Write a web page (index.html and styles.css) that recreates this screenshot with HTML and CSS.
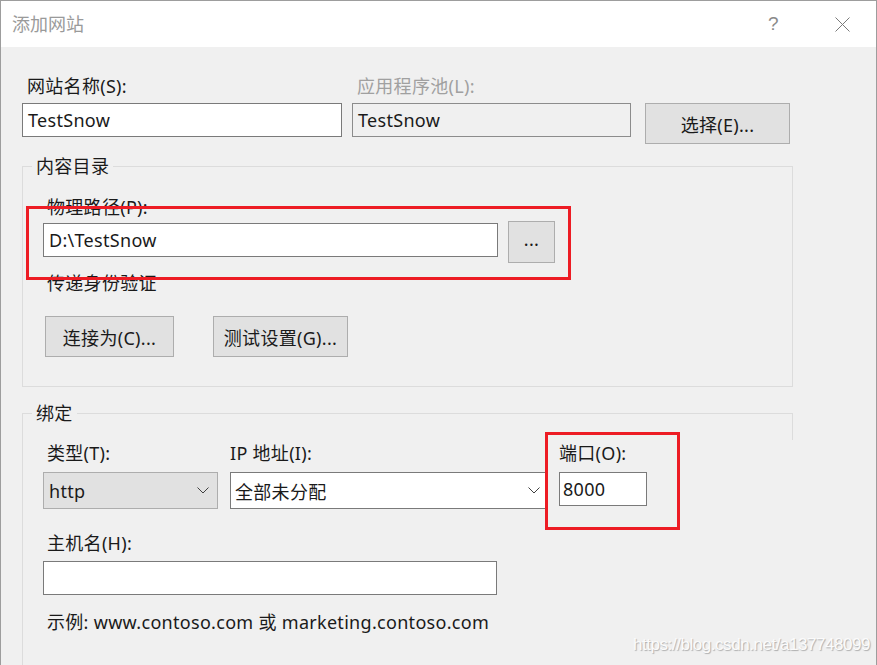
FILE: index.html
```html
<!DOCTYPE html>
<html lang="zh-CN">
<head>
<meta charset="utf-8">
<title>添加网站</title>
<link rel="stylesheet" href="styles.css">
</head>
<body>
<div class="window">
  <div class="titlebar">
    <span class="title">添加网站</span>
    <span class="help">?</span>
    <svg class="close" width="15" height="15" viewBox="0 0 15 15"><path d="M0.5 0.5 L14.5 14.5 M14.5 0.5 L0.5 14.5" stroke="#7a7a7a" stroke-width="1" fill="none"/></svg>
  </div>
  <div class="content">
    <div class="row1">
      <div class="field site">
        <div class="label top">网站名称(S):</div>
        <div class="input"><span>TestSnow</span></div>
      </div>
      <div class="field pool">
        <div class="label top disabled">应用程序池(L):</div>
        <div class="input readonly"><span>TestSnow</span></div>
      </div>
      <div class="btn btn-select">选择(E)...</div>
    </div>

    <div class="group group1">
      <div class="group-title">内容目录</div>
      <div class="label path-label">物理路径(P):</div>
      <div class="path-row">
        <div class="input path-input"><span>D:\TestSnow</span></div>
        <div class="btn btn-browse">...</div>
      </div>
      <div class="label auth-label">传递身份验证</div>
      <div class="auth-row">
        <div class="btn btn-connect">连接为(C)...</div>
        <div class="btn btn-test">测试设置(G)...</div>
      </div>
    </div>

    <div class="group group2">
      <div class="group-title">绑定</div>
      <div class="bind-row">
        <div class="col col-type">
          <div class="label type-label">类型(T):</div>
          <div class="select select-type"><span>http</span>
            <svg class="chev" width="12" height="7" viewBox="0 0 12 7"><path d="M0.5 0.5 L6 6 L11.5 0.5" stroke="#404040" stroke-width="1" fill="none"/></svg>
          </div>
        </div>
        <div class="col col-ip">
          <div class="label">IP 地址(I):</div>
          <div class="select select-ip"><span>全部未分配</span>
            <svg class="chev" width="12" height="7" viewBox="0 0 12 7"><path d="M0.5 0.5 L6 6 L11.5 0.5" stroke="#404040" stroke-width="1" fill="none"/></svg>
          </div>
        </div>
        <div class="col col-port">
          <div class="label">端口(O):</div>
          <div class="input port-input"><span>8000</span></div>
        </div>
      </div>
      <div class="label host-label">主机名(H):</div>
      <div class="input host-input"></div>
      <div class="label example">示例: www.contoso.com 或 marketing.contoso.com</div>
    </div>
  </div>

  <div class="mark mark1"></div>
  <div class="mark mark2"></div>
  <div class="watermark">https://blog.csdn.net/a137748099</div>
</div>
</body>
</html>
```
FILE: styles.css
```css
html, body {
  margin: 0;
  padding: 0;
  background: #f0f0f0;
}
body {
  font-family: "Noto Sans", "Noto Sans CJK SC", sans-serif;
  font-size: 18px;
  letter-spacing: 0.3px;
  color: #1a1a1a;
}
.window {
  position: relative;
  width: 877px;
  height: 665px;
  box-sizing: border-box;
  border: 1px solid #9d9d9d;
  border-bottom: none;
  background: #f0f0f0;
  overflow: hidden;
}
.titlebar {
  height: 46px;
  background: #ffffff;
  display: flex;
  align-items: center;
  padding: 0 26px 0 11px;
}
.title {
  color: #9a9a9a;
  font-size: 18px;
  line-height: 20px;
  letter-spacing: 0;
}
.help {
  margin-left: auto;
  color: #8a8a8a;
  font-family: "Liberation Sans", sans-serif;
  font-size: 19px;
  line-height: 20px;
  width: 9px;
}
.close {
  margin-left: 58px;
  display: block;
}
.content {
  padding-left: 21px;
}
.label {
  line-height: 20px;
  white-space: nowrap;
}
.label.disabled {
  color: #a0a0a0;
}
.input {
  box-sizing: border-box;
  height: 34px;
  border: 1px solid #7a7a7a;
  background: #ffffff;
  display: flex;
  align-items: center;
  padding-left: 5px;
  white-space: nowrap;
}
.input.readonly {
  background: #f0f0f0;
  border-color: #8c8c8c;
}
.btn {
  box-sizing: border-box;
  height: 41px;
  border: 1px solid #adadad;
  background: #e1e1e1;
  display: flex;
  align-items: center;
  justify-content: center;
  white-space: nowrap;
}
.row1 {
  display: flex;
  margin-top: 29px;
}
.label.top {
  padding-left: 5px;
  margin-bottom: 7px;
}
.site {
  width: 320px;
}
.pool {
  width: 279px;
  margin-left: 10px;
}
.btn-select {
  width: 145px;
  margin-left: 14px;
  margin-top: 27px;
}
.group {
  position: relative;
  box-sizing: border-box;
  width: 771px;
  border: 1px solid #dcdcdc;
  padding-left: 20px;
}
.group-title {
  display: table;
  background: #f0f0f0;
  line-height: 20px;
  padding: 0 4px;
  margin: -11px 0 0 -11px;
}
.group1 {
  margin-top: 22px;
  padding-bottom: 29px;
}
.path-label {
  margin-top: 21px;
  padding-left: 4px;
  margin-bottom: 6px;
}
.path-row {
  display: flex;
  align-items: flex-start;
}
.path-input {
  width: 455px;
}
.btn-browse {
  width: 47px;
  height: 42px;
  margin-top: -2px;
  margin-left: 10px;
  padding-bottom: 6px;
}
.auth-label {
  margin-top: 10px;
  padding-left: 4px;
}
.auth-row {
  display: flex;
  margin-top: 23px;
  padding-left: 2px;
}
.btn-connect {
  width: 129px;
}
.btn-test {
  width: 135px;
  margin-left: 39px;
}
.group2 {
  margin-top: 26px;
  height: 300px;
  border-right: none;
  border-bottom: none;
}
.group2::after {
  content: "";
  position: absolute;
  right: 0;
  top: -1px;
  width: 1px;
  height: 27px;
  background: #dcdcdc;
}
.bind-row {
  display: flex;
  margin-top: 20px;
}
.col .label {
  margin-bottom: 9px;
}
.type-label {
  padding-left: 4px;
}
.col-type {
  width: 175px;
}
.col-ip {
  width: 318px;
  margin-left: 12px;
}
.col-port {
  width: 88px;
  margin-left: 11px;
}
.select {
  box-sizing: border-box;
  height: 37px;
  display: flex;
  align-items: center;
  padding-left: 5px;
  padding-right: 8px;
  white-space: nowrap;
}
.select .chev {
  margin-left: auto;
  display: block;
}
.select-type {
  background: #e1e1e1;
  border: 1px solid #adadad;
}
.select-ip {
  background: #ffffff;
  border: 1px solid #7a7a7a;
  padding-left: 4px;
  padding-right: 7px;
}
.port-input {
  padding-left: 3px;
}
.host-label {
  margin-top: 24px;
  margin-bottom: 8px;
  padding-left: 4px;
}
.host-input {
  width: 454px;
}
.example {
  margin-top: 17px;
  padding-left: 4px;
}
.mark {
  position: absolute;
  box-sizing: border-box;
  border: 3px solid #ed1c24;
}
.mark1 {
  left: 25px;
  top: 205px;
  width: 545px;
  height: 74px;
}
.mark2 {
  left: 544px;
  top: 431px;
  width: 135px;
  height: 98px;
}
.watermark {
  position: absolute;
  left: 632px;
  top: 634px;
  font-family: "Liberation Sans", sans-serif;
  font-size: 17px;
  line-height: 20px;
  letter-spacing: -0.45px;
  color: #fbfbfb;
  text-shadow: 1px 1px 1px rgba(0, 0, 0, 0.28);
  white-space: nowrap;
}
```
